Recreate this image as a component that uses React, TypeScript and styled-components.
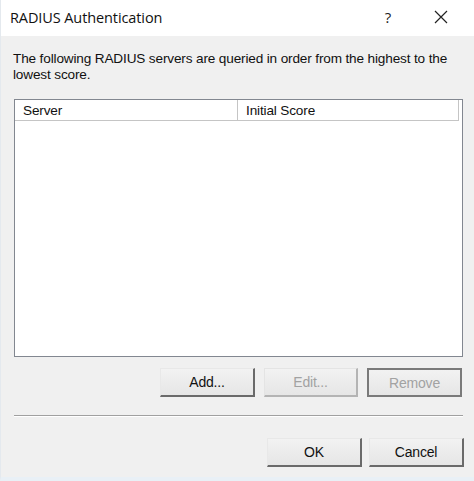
import React from "react";
import styled, { createGlobalStyle } from "styled-components";

const Global = createGlobalStyle`
  html, body { margin: 0; padding: 0; background: #f0f0f0; }
  #root { width: 474px; height: 481px; }
`;

const Window = styled.div`
  width: 474px;
  height: 481px;
  display: flex;
  flex-direction: column;
  box-sizing: border-box;
  background: #f0f0f0;
  border-left: 1px solid #e4e9ee;
  border-bottom: 4px solid #e9f0f6;
  font-family: "Liberation Sans", Arial, sans-serif;
  overflow: hidden;
`;

const TitleBar = styled.div`
  height: 36px;
  flex: none;
  background: #ffffff;
  display: flex;
  align-items: center;
  padding-left: 9px;
  padding-right: 10px;
`;

const Title = styled.div`
  flex: 1;
  font-family: "Open Sans", "Noto Sans", sans-serif;
  font-size: 14.5px;
  color: #111;
  letter-spacing: -0.1px;
  margin-top: -2px;
`;

const CaptionButton = styled.div<{ $gap?: number }>`
  width: 46px;
  height: 36px;
  margin-right: ${(p) => p.$gap ?? 0}px;
  display: flex;
  align-items: center;
  justify-content: center;
  color: #222;
  font-family: "Open Sans", "Noto Sans", sans-serif;
  font-size: 15px;
  margin-top: -2px;
`;

const Body = styled.div`
  flex: 1;
  display: flex;
  flex-direction: column;
  padding: 15px 12px 0 12px;
`;

const Description = styled.p`
  margin: 0;
  font-size: 13.6px;
  line-height: 16px;
  color: #111;
  letter-spacing: -0.15px;
  white-space: nowrap;
`;

const ListBox = styled.div`
  margin-top: 16px;
  margin-left: 1px;
  width: 449px;
  height: 258px;
  box-sizing: border-box;
  border: 1px solid #828790;
  background: #ffffff;
  display: flex;
  flex-direction: column;
`;

const HeaderRow = styled.div`
  display: flex;
  height: 21px;
`;

const HeaderCell = styled.div<{ $w: number }>`
  width: ${(p) => p.$w}px;
  box-sizing: border-box;
  height: 21px;
  border-bottom: 1px solid #c5c5c5;
  border-right: 1px solid #c5c5c5;
  padding-left: 8px;
  padding-top: 1px;
  display: flex;
  align-items: center;
  font-size: 13.6px;
  color: #111;
  letter-spacing: -0.15px;
`;

const ButtonRow = styled.div<{ $top: number; $gap: number; $right: number }>`
  display: flex;
  justify-content: flex-end;
  gap: ${(p) => p.$gap}px;
  margin-top: ${(p) => p.$top}px;
  margin-right: ${(p) => p.$right}px;
`;

const Button = styled.button<{ $disabled?: boolean; $framed?: boolean; $w?: number }>`
  width: ${(p) => p.$w ?? 95}px;
  height: 29px;
  box-sizing: border-box;
  margin: 0;
  padding: 0;
  font-family: "Liberation Sans", Arial, sans-serif;
  font-size: 14px;
  letter-spacing: -0.2px;
  color: ${(p) => (p.$disabled ? "#a2a2a2" : "#111")};
  background: linear-gradient(#f2f2f2, #e6e6e6);
  border-style: solid;
  border-width: ${(p) => (p.$framed ? "2px" : "1px 2px 2px 1px")};
  border-color: ${(p) =>
    p.$framed
      ? "#7a7a7a"
      : p.$disabled
      ? "#e4e4e4 #b4b4b4 #b4b4b4 #e4e4e4"
      : "#e8e8e8 #6a6a6a #6a6a6a #e8e8e8"};
  border-radius: 0;
`;

const Separator = styled.div`
  margin-top: 18px;
  margin-left: 1px;
  width: 449px;
  height: 1px;
  background: #a0a0a0;
  border-bottom: 1px solid #ffffff;
`;

export default function App() {
  return (
    <>
      <Global />
      <Window>
        <TitleBar>
          <Title>RADIUS Authentication</Title>
          <CaptionButton $gap={7}>?</CaptionButton>
          <CaptionButton>
            <svg width="14" height="14" viewBox="0 0 14 14">
              <path d="M1 1 L13 13 M13 1 L1 13" stroke="#222" strokeWidth="1.2" fill="none" />
            </svg>
          </CaptionButton>
        </TitleBar>
        <Body>
          <Description>
            The following RADIUS servers are queried in order from the highest to the
            <br />
            lowest score.
          </Description>
          <ListBox>
            <HeaderRow>
              <HeaderCell $w={223}>Server</HeaderCell>
              <HeaderCell $w={221}>Initial Score</HeaderCell>
            </HeaderRow>
          </ListBox>
          <ButtonRow $top={11} $gap={9} $right={0}>
            <Button>Add...</Button>
            <Button $disabled $w={94}>
              Edit...
            </Button>
            <Button $disabled $framed>
              Remove
            </Button>
          </ButtonRow>
          <Separator />
          <ButtonRow $top={21} $gap={7} $right={-2}>
            <Button>OK</Button>
            <Button>Cancel</Button>
          </ButtonRow>
        </Body>
      </Window>
    </>
  );
}
